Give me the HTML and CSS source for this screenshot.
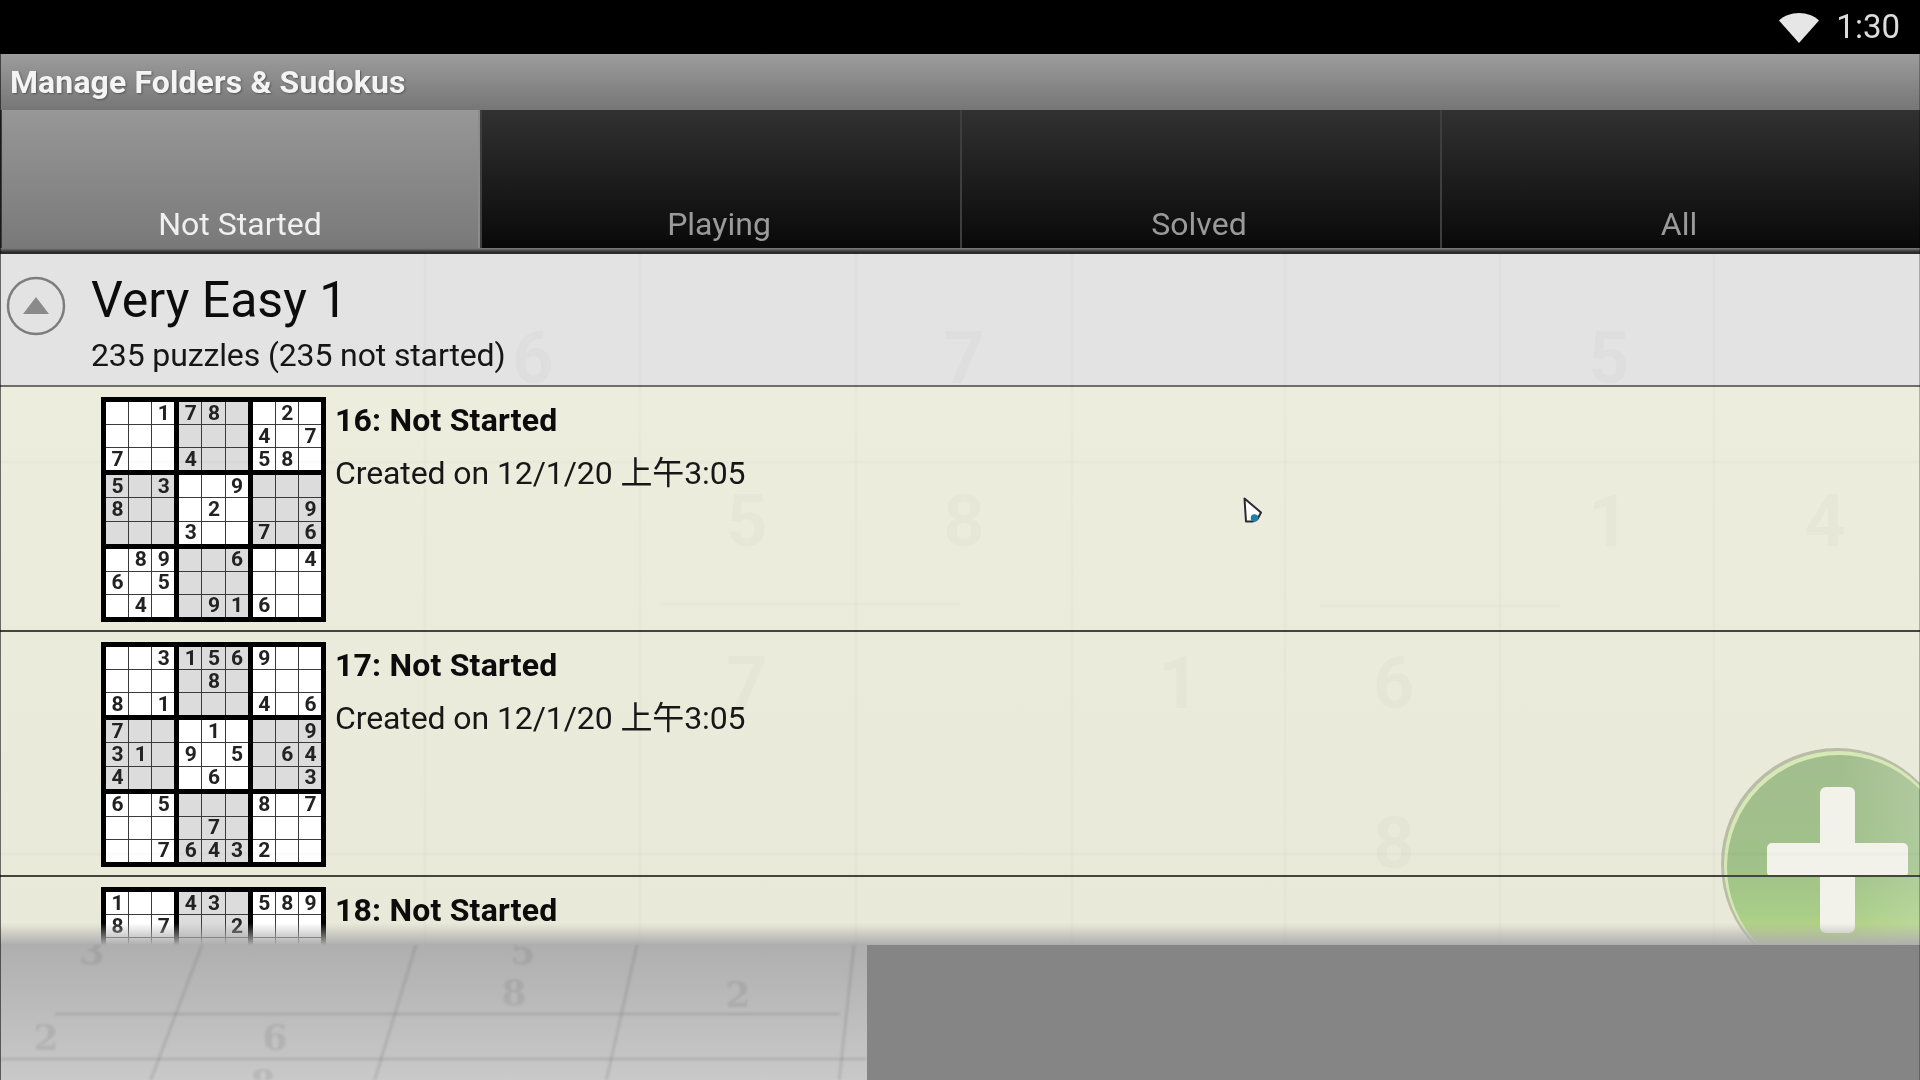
FILE: index.html
```html
<!DOCTYPE html>
<html lang="en">
<head>
<meta charset="utf-8">
<title>Manage Folders &amp; Sudokus</title>
<link rel="stylesheet" href="styles.css">
</head>
<body>
<div class="screen">
  <header class="status">
    <svg class="wifi" viewBox="0 0 40 30"><path d="M0 7.5C5 2.8 12 0 20 0s15 2.8 20 7.5L20 30z"/></svg>
    <span class="clock">1:30</span>
  </header>
  <div class="titlebar">Manage Folders &amp; Sudokus</div>
  <nav class="tabs">
    <div class="tab active">Not Started</div>
    <div class="tab">Playing</div>
    <div class="tab">Solved</div>
    <div class="tab">All</div>
  </nav>
  <main class="list">
    <svg class="fab" viewBox="0 0 234 234">
      <defs>
        <linearGradient id="fabfill" x1="0" y1="0" x2="0" y2="1">
          <stop offset="0" stop-color="#a2bd8e"/>
          <stop offset=".5" stop-color="#a0c189"/>
          <stop offset=".7" stop-color="#a8cd88"/>
          <stop offset=".85" stop-color="#bdd880"/>
          <stop offset="1" stop-color="#d0dca3"/>
        </linearGradient>
        <linearGradient id="fabshine" x1="0" y1="0" x2="1" y2="0">
          <stop offset=".5" stop-color="#fff" stop-opacity="0"/>
          <stop offset="1" stop-color="#fff" stop-opacity=".22"/>
        </linearGradient>
      </defs>
      <circle cx="117" cy="117" r="116" fill="#b9bda6"/>
      <circle cx="118" cy="118" r="114" fill="#d5e8b5"/>
      <circle cx="119" cy="120" r="112" fill="url(#fabfill)"/>
      <circle cx="119" cy="120" r="112" fill="url(#fabshine)"/>
      <path d="M100 46a6 6 0 0 1 6-6h23a6 6 0 0 1 6 6v50h48a5 5 0 0 1 5 5v24a5 5 0 0 1-5 5h-48v50a6 6 0 0 1-6 6h-23a6 6 0 0 1-6-6v-50H52a5 5 0 0 1-5-5v-24a5 5 0 0 1 5-5h48z" fill="#f3f2ea"/>
    </svg>
    <section class="folder">
      <svg class="collapse" viewBox="0 0 60 60"><circle cx="30" cy="30" r="28" fill="none" stroke="#7d7d7d" stroke-width="2.5"/><path d="M17 38L30 21 43 38z" fill="#8a8a8a"/></svg>
      <div class="folder-text">
        <h1 class="folder-name">Very Easy 1</h1>
        <p class="folder-meta">235 puzzles (235 not started)</p>
      </div>
    </section>

    <article class="puzzle">
      <div class="board">
        <div class="box"><i></i><i></i><i>1</i><i></i><i></i><i></i><i>7</i><i></i><i></i></div>
        <div class="box shade"><i>7</i><i>8</i><i></i><i></i><i></i><i></i><i>4</i><i></i><i></i></div>
        <div class="box"><i></i><i>2</i><i></i><i>4</i><i></i><i>7</i><i>5</i><i>8</i><i></i></div>
        <div class="box shade"><i>5</i><i></i><i>3</i><i>8</i><i></i><i></i><i></i><i></i><i></i></div>
        <div class="box"><i></i><i></i><i>9</i><i></i><i>2</i><i></i><i>3</i><i></i><i></i></div>
        <div class="box shade"><i></i><i></i><i></i><i></i><i></i><i>9</i><i>7</i><i></i><i>6</i></div>
        <div class="box"><i></i><i>8</i><i>9</i><i>6</i><i></i><i>5</i><i></i><i>4</i><i></i></div>
        <div class="box shade"><i></i><i></i><i>6</i><i></i><i></i><i></i><i></i><i>9</i><i>1</i></div>
        <div class="box"><i></i><i></i><i>4</i><i></i><i></i><i></i><i>6</i><i></i><i></i></div>
      </div>
      <div class="puzzle-text">
        <h2 class="puzzle-name">16: Not Started</h2>
        <p class="puzzle-date">Created on 12/1/20 上午3:05</p>
      </div>
    </article>

    <article class="puzzle">
      <div class="board">
        <div class="box"><i></i><i></i><i>3</i><i></i><i></i><i></i><i>8</i><i></i><i>1</i></div>
        <div class="box shade"><i>1</i><i>5</i><i>6</i><i></i><i>8</i><i></i><i></i><i></i><i></i></div>
        <div class="box"><i>9</i><i></i><i></i><i></i><i></i><i></i><i>4</i><i></i><i>6</i></div>
        <div class="box shade"><i>7</i><i></i><i></i><i>3</i><i>1</i><i></i><i>4</i><i></i><i></i></div>
        <div class="box"><i></i><i>1</i><i></i><i>9</i><i></i><i>5</i><i></i><i>6</i><i></i></div>
        <div class="box shade"><i></i><i></i><i>9</i><i></i><i>6</i><i>4</i><i></i><i></i><i>3</i></div>
        <div class="box"><i>6</i><i></i><i>5</i><i></i><i></i><i></i><i></i><i></i><i>7</i></div>
        <div class="box shade"><i></i><i></i><i></i><i></i><i>7</i><i></i><i>6</i><i>4</i><i>3</i></div>
        <div class="box"><i>8</i><i></i><i>7</i><i></i><i></i><i></i><i>2</i><i></i><i></i></div>
      </div>
      <div class="puzzle-text">
        <h2 class="puzzle-name">17: Not Started</h2>
        <p class="puzzle-date">Created on 12/1/20 上午3:05</p>
      </div>
    </article>

    <article class="puzzle">
      <div class="board">
        <div class="box"><i>1</i><i></i><i></i><i>8</i><i></i><i>7</i><i></i><i></i><i></i></div>
        <div class="box shade"><i>4</i><i>3</i><i></i><i></i><i></i><i>2</i><i></i><i></i><i></i></div>
        <div class="box"><i>5</i><i>8</i><i>9</i><i></i><i></i><i></i><i></i><i></i><i></i></div>
        <div class="box shade"></div>
        <div class="box"></div>
        <div class="box shade"></div>
        <div class="box"></div>
        <div class="box shade"></div>
        <div class="box"></div>
      </div>
      <div class="puzzle-text">
        <h2 class="puzzle-name">18: Not Started</h2>
      </div>
    </article>

    <svg class="watermark" viewBox="0 0 1920 691" aria-hidden="true">
      <g class="wm-lines">
        <path d="M425 0V691M640 0V691M856 0V691M1072 0V691M1285 0V691M1500 0V691M1714 0V691"/>
        <path d="M0 208H1920M660 350H960M1320 352H1560M0 600H1920"/>
      </g>
      <g class="wm-digits">
        <text x="533" y="129">6</text><text x="964" y="129">7</text><text x="1609" y="129">5</text>
        <text x="747" y="292">5</text><text x="964" y="292">8</text><text x="1609" y="292">1</text><text x="1825" y="292">4</text>
        <text x="747" y="454">7</text><text x="1179" y="454">1</text><text x="1394" y="454">6</text>
        <text x="1394" y="614">8</text>
      </g>
    </svg>
    <div class="fade"></div>
  </main>
  <footer class="bottom">
    <svg class="bottom-art" viewBox="0 0 867 135" aria-hidden="true">
      <g class="art-lines">
        <path d="M202 0L150 137M416 0L374 137M637 0L606 137M854 0L839 137"/>
        <path d="M55 69H840M0 114H867"/>
      </g>
      <g class="art-digits">
        <text x="92" y="19">3</text><text x="523" y="19">5</text><text x="514" y="60">8</text>
        <text x="738" y="62">2</text><text x="46" y="105">2</text><text x="275" y="105">6</text><text x="263" y="150">8</text>
      </g>
    </svg>
    <div class="ad-slot"></div>
  </footer>
  <svg class="cursor" viewBox="0 0 20 26"><path d="M1.5 1.5L18 15.5 14.5 22 10 24.5H3z" fill="#fff" stroke="#2a2a30" stroke-width="2" stroke-linejoin="round"/><circle cx="11.5" cy="21" r="3.8" fill="#1f7fa6"/></svg>
</div>
</body>
</html>
```

FILE: styles.css
```css
* { box-sizing: border-box; }
html, body { margin: 0; padding: 0; }
body { width: 1920px; height: 1080px; overflow: hidden; background: #000; font-family: Roboto, "Noto Sans CJK SC", sans-serif; }
h1, h2, p { margin: 0; font-weight: inherit; }
.screen { position: relative; width: 1920px; height: 1080px; display: flex; flex-direction: column; overflow: hidden; filter: blur(.45px); }
.screen::after { content: ""; position: absolute; inset: 0; box-shadow: inset 1px 0 0 rgba(0, 0, 0, .55), inset -1px 0 0 rgba(0, 0, 0, .25); pointer-events: none; }

.status { height: 54px; flex: none; background: #000; display: flex; align-items: center; justify-content: flex-end; padding-right: 20px; gap: 17px; }
.wifi { width: 40px; height: 30px; fill: #e6e6e6; margin-top: 1px; }
.clock { color: #dcdcdc; font-size: 33px; line-height: 54px; }

.titlebar { height: 56px; flex: none; padding-left: 10px; line-height: 56px; font-size: 32px; font-weight: 700; letter-spacing: .1px; color: #f4f4f4; text-shadow: 1px 1px 2px #555; background: linear-gradient(#9c9c9c, #767676); }

.tabs { height: 144px; flex: none; display: grid; grid-template-columns: repeat(4, 1fr); padding: 0 0 6px; background: linear-gradient(#808080 0 138px, #2c2c2c 142px); }
.tab { height: 138px; display: flex; align-items: flex-end; justify-content: center; padding: 0 4px 0 0; font-size: 32px; line-height: 48px; color: #9a9a9a; background: linear-gradient(#313131, #090909); border-left: 2px solid #3e3e3e; }
.tab.active { padding: 0; color: #f0f0f0; background: linear-gradient(#979797, #797979); border-left: 2px solid #3a3a3a; border-right: 2px solid #8c8c8c; }

.list { position: relative; height: 691px; flex: none; overflow: hidden; background: linear-gradient(#eeeedf, #e9e9da); }
.fab { position: absolute; left: 1720px; top: 493px; width: 234px; height: 234px; }
.folder { position: relative; height: 133px; display: flex; background: #e3e3e3; border-bottom: 2px solid #6e6e6a; }
.collapse { width: 60px; height: 60px; margin: 22px 0 0 6px; flex: none; }
.folder-text { margin-left: 25px; }
.folder-name { font-size: 50px; line-height: 56px; margin-top: 18px; color: #0c0c0c; }
.folder-meta { font-size: 32px; line-height: 42px; margin-top: 6px; letter-spacing: -.13px; color: #161616; }

.puzzle { position: relative; height: 245px; flex: none; display: flex; padding: 10px 0 0 101px; border-bottom: 2px solid #45453f; }
.board { width: 225px; height: 225px; flex: none; background: #000; padding: 5px; gap: 5px; display: grid; grid-template-columns: repeat(3, 1fr); grid-template-rows: repeat(3, 1fr); }
.box { display: grid; grid-template-columns: repeat(3, 1fr); grid-template-rows: repeat(3, 1fr); gap: 1px; background: #3a3a3a; }
.box i { display: flex; align-items: center; justify-content: center; padding-left: 1px; background: #fff; font-style: normal; font-weight: 700; font-size: 21px; line-height: 1; color: #222; min-width: 0; min-height: 0; }
.box.shade i { background: #dcdcdc; }
.box:empty { background: #fff; }
.box.shade:empty { background: #dcdcdc; }
.puzzle-text { margin-left: 9px; }
.puzzle-name { font-size: 32px; font-weight: 700; line-height: 42px; margin-top: 2px; letter-spacing: .2px; color: #0c0c0c; }
.puzzle-date { font-size: 32px; line-height: 44px; margin-top: 10px; letter-spacing: -.1px; color: #171717; }

.watermark { position: absolute; inset: 0; width: 1920px; height: 691px; pointer-events: none; }
.wm-lines { stroke: rgba(0, 0, 0, .014); stroke-width: 3; fill: none; }
.wm-digits { fill: rgba(0, 0, 0, .02); font: 700 72px Roboto, sans-serif; text-anchor: middle; }
.fade { position: absolute; left: 0; right: 0; bottom: 0; height: 22px; background: linear-gradient(rgba(174, 174, 174, 0), #aeaeae); }

.bottom { position: relative; flex: 1; display: flex; background: linear-gradient(#afafaf, #c9c9c9); }
.bottom-art { width: 867px; height: 135px; flex: none; filter: blur(1px); }
.art-lines { stroke: rgba(90, 90, 90, .16); stroke-width: 3; fill: none; }
.art-digits { fill: rgba(80, 80, 80, .13); font: 700 36px "DejaVu Serif", serif; text-anchor: middle; }
.ad-slot { flex: 1; background: #858585; }

.cursor { position: absolute; left: 1243px; top: 497px; width: 20px; height: 26px; }
```
